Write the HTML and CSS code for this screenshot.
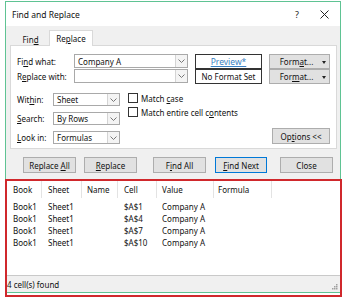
FILE: index.html
```html
<!DOCTYPE html>
<html>
<head>
<meta charset="utf-8">
<link rel="stylesheet" href="styles.css">
</head>
<body>
<div class="window">
  <div class="titlebar">
    <span class="title">Find and Replace</span>
    <span class="help">?</span>
    <svg class="close-x" width="9" height="9" viewBox="0 0 9 9"><path d="M0.5 0.5L8.5 8.5M8.5 0.5L0.5 8.5" stroke="#222" stroke-width="1" fill="none"/></svg>
  </div>

  <div class="tab-strip">
    <div class="tab"><span>Fin<u>d</u></span></div>
    <div class="tab active"><span>Re<u>p</u>lace</span></div>
  </div>

  <div class="panel">
    <div class="top-grid">
      <div class="label">Fi<u>n</u>d what:</div>
      <div class="combo"><span class="combo-val">Company A</span><span class="arrow"><svg width="7" height="4" viewBox="0 0 7 4"><path d="M0.5 0.5L3.5 3.5L6.5 0.5" stroke="#777" fill="none"/></svg></span></div>
      <div class="fmt-box preview">Preview*</div>
      <div class="btn fmt"><span>Form<u>a</u>t...</span><span class="tri"></span></div>

      <div class="label">R<u>e</u>place with:</div>
      <div class="combo"><span class="combo-val"></span><span class="arrow"><svg width="7" height="4" viewBox="0 0 7 4"><path d="M0.5 0.5L3.5 3.5L6.5 0.5" stroke="#777" fill="none"/></svg></span></div>
      <div class="fmt-box">No Format Set</div>
      <div class="btn fmt"><span>For<u>m</u>at...</span><span class="tri"></span></div>
    </div>

    <div class="bottom">
      <div class="opt-grid">
        <div class="label">Wit<u>h</u>in:</div>
        <div class="select"><span class="combo-val">Sheet</span><span class="arrow"><svg width="7" height="4" viewBox="0 0 7 4"><path d="M0.5 0.5L3.5 3.5L6.5 0.5" stroke="#777" fill="none"/></svg></span></div>
        <div class="label"><u>S</u>earch:</div>
        <div class="select"><span class="combo-val">By Rows</span><span class="arrow"><svg width="7" height="4" viewBox="0 0 7 4"><path d="M0.5 0.5L3.5 3.5L6.5 0.5" stroke="#777" fill="none"/></svg></span></div>
        <div class="label"><u>L</u>ook in:</div>
        <div class="select"><span class="combo-val">Formulas</span><span class="arrow"><svg width="7" height="4" viewBox="0 0 7 4"><path d="M0.5 0.5L3.5 3.5L6.5 0.5" stroke="#777" fill="none"/></svg></span></div>
      </div>
      <div class="checks">
        <div class="check"><span class="box"></span><span>Match <u>c</u>ase</span></div>
        <div class="check"><span class="box"></span><span>Match entire cell c<u>o</u>ntents</span></div>
      </div>
      <div class="btn options"><span>Op<u>t</u>ions &lt;&lt;</span></div>
    </div>
  </div>

  <div class="btn-row">
    <div class="btn action"><span>Replace <u>A</u>ll</span></div>
    <div class="btn action"><span><u>R</u>eplace</span></div>
    <div class="btn action group-start"><span>F<u>i</u>nd All</span></div>
    <div class="btn action default"><span><u>F</u>ind Next</span></div>
    <div class="btn action close-btn"><span>Close</span></div>
  </div>

  <div class="results">
    <div class="list">
      <div class="row head">
        <div class="c c-book">Book</div>
        <div class="c c-sheet">Sheet</div>
        <div class="c c-name">Name</div>
        <div class="c c-cell">Cell</div>
        <div class="c c-value">Value</div>
        <div class="c c-formula">Formula</div>
        <div class="c c-rest"></div>
      </div>
      <div class="row">
        <div class="c c-book">Book1</div><div class="c c-sheet">Sheet1</div><div class="c c-name"></div><div class="c c-cell">$A$1</div><div class="c c-value">Company A</div><div class="c c-formula"></div>
      </div>
      <div class="row">
        <div class="c c-book">Book1</div><div class="c c-sheet">Sheet1</div><div class="c c-name"></div><div class="c c-cell">$A$4</div><div class="c c-value">Company A</div><div class="c c-formula"></div>
      </div>
      <div class="row">
        <div class="c c-book">Book1</div><div class="c c-sheet">Sheet1</div><div class="c c-name"></div><div class="c c-cell">$A$7</div><div class="c c-value">Company A</div><div class="c c-formula"></div>
      </div>
      <div class="row">
        <div class="c c-book">Book1</div><div class="c c-sheet">Sheet1</div><div class="c c-name"></div><div class="c c-cell">$A$10</div><div class="c c-value">Company A</div><div class="c c-formula"></div>
      </div>
    </div>
    <div class="status">
      <span>4 cell(s) found</span>
      <svg class="grip" width="7" height="7" viewBox="0 0 7 7"><g fill="#a0a0a0"><rect x="5" y="1" width="1.5" height="1.5"/><rect x="3" y="3" width="1.5" height="1.5"/><rect x="5" y="3" width="1.5" height="1.5"/><rect x="1" y="5" width="1.5" height="1.5"/><rect x="3" y="5" width="1.5" height="1.5"/><rect x="5" y="5" width="1.5" height="1.5"/></g></svg>
    </div>
  </div>
</div>
<div class="annot"></div>
</body>
</html>
```

FILE: styles.css
```css
* { box-sizing: border-box; }
html, body { margin: 0; padding: 0; background: #fff; }
body {
  font-family: "Noto Sans", "Open Sans", sans-serif;
  font-size: 8px;
  color: #111;
  width: 346px;
  height: 300px;
  overflow: hidden;
  position: relative;
}
u { text-decoration: underline; text-underline-offset: 1px; }

.window {
  margin: 1px 0 0 5px;
  width: 336px;
  height: 292px;
  border: 1px solid #5fc393;
  background: #f0f0f0;
  display: flex;
  flex-direction: column;
}

.titlebar {
  height: 24px;
  background: #fff;
  display: flex;
  align-items: center;
  padding-left: 6px;
  font-size: 8.5px;
}
.help { margin-left: auto; margin-right: 21px; font-size: 9px; color: #222; }
.close-x { margin-right: 11px; }

.tab-strip {
  margin-top: 4px;
  margin-bottom: -1px;
  padding-left: 6px;
  display: flex;
  align-items: flex-end;
  height: 16px;
}
.tab {
  height: 14px;
  width: 37px;
  display: flex;
  align-items: center;
  justify-content: center;
}
.tab.active {
  height: 16px;
  width: 44px;
  background: #fff;
  border: 1px solid #d9d9d9;
  border-bottom: none;
  position: relative;
  z-index: 1;
}

.panel {
  margin: 0 3px 0 4px;
  height: 104px;
  background: #fff;
  border: 1px solid #d9d9d9;
  padding: 8px 6px 4px 6px;
  display: flex;
  flex-direction: column;
}

.top-grid {
  display: grid;
  grid-template-columns: 50px 114px 67px 61px;
  grid-template-rows: 14px 14px;
  column-gap: 7px;
  row-gap: 1px;
  align-items: center;
}
.label { white-space: nowrap; }

.combo, .select {
  height: 14px;
  border: 1px solid #a9a9a9;
  background: #fff;
  display: flex;
  align-items: stretch;
}
.select { height: 13px; }
.combo-val { flex: 1; padding-left: 3px; display: flex; align-items: center; white-space: nowrap; }
.arrow {
  width: 12px;
  border-left: 1px solid #d4d4d4;
  background: #f4f4f4;
  display: flex;
  align-items: center;
  justify-content: center;
}

.fmt-box {
  height: 15px;
  border: 1px solid #333;
  display: flex;
  align-items: center;
  justify-content: center;
  white-space: nowrap;
}
.preview { color: #3a7fc1; text-decoration: underline; font-size: 8.5px; }

.btn {
  background: #e1e1e1;
  border: 1px solid #adadad;
  display: flex;
  align-items: center;
  justify-content: center;
  white-space: nowrap;
  height: 15px;
}
.fmt { position: relative; padding-right: 6px; }
.tri {
  position: absolute;
  right: 3px;
  top: 6px;
  width: 0; height: 0;
  border-left: 2px solid transparent;
  border-right: 2px solid transparent;
  border-top: 3px solid #222;
}

.bottom {
  margin-top: 10px;
  display: flex;
  align-items: flex-start;
  flex: 1;
}
.opt-grid {
  display: grid;
  grid-template-columns: 36px 67px;
  grid-template-rows: 13px 13px 13px;
  row-gap: 6px;
  align-items: center;
}
.checks {
  margin-left: 8px;
  display: flex;
  flex-direction: column;
  gap: 4px;
}
.check { display: flex; align-items: center; height: 10px; white-space: nowrap; }
.box {
  width: 10px; height: 10px;
  border: 1px solid #333;
  background: #fff;
  margin-right: 3px;
}
.options {
  margin-left: auto;
  align-self: flex-end;
  width: 58px;
  height: 16px;
}

.btn-row {
  margin-top: 8px;
  padding-left: 17px;
  display: flex;
  gap: 8px;
}
.action { width: 53px; height: 16px; }
.group-start { margin-left: 8px; }
.default { border: 1px solid #0078d7; width: 52px; margin-left: 1px; }
.close-btn { margin-left: 5px; }

.results {
  margin-top: 6px;
  flex: 1;
  display: flex;
  flex-direction: column;
  background: #fff;
}
.list { flex: 1; padding-top: 2px; }
.row { display: flex; height: 12px; align-items: center; white-space: nowrap; }
.row.head { height: 17px; margin-bottom: 2px; }
.row.head .c { border-right: 1px solid #e3e3e3; height: 100%; display: flex; align-items: center; }
.c { padding-left: 6px; overflow: hidden; }
.c-book { width: 36px; padding-left: 7px; }
.c-sheet { width: 40px; }
.c-name { width: 36px; padding-left: 5px; }
.c-cell { width: 39px; }
.c-value { width: 57px; padding-left: 5px; }
.c-formula { width: 58px; padding-left: 4px; }
.row.head .c-rest { border-right: none; flex: 1; }

.status {
  height: 17px;
  border-top: 1px solid #c9c9c9;
  background: #f0f0f0;
  display: flex;
  align-items: center;
  padding-left: 1px;
  position: relative;
}
.grip { position: absolute; right: 2px; bottom: 2px; }

.annot {
  position: absolute;
  left: 5px;
  top: 179px;
  width: 337px;
  height: 118px;
  border: 2px solid #d0282c;
  pointer-events: none;
}
```
